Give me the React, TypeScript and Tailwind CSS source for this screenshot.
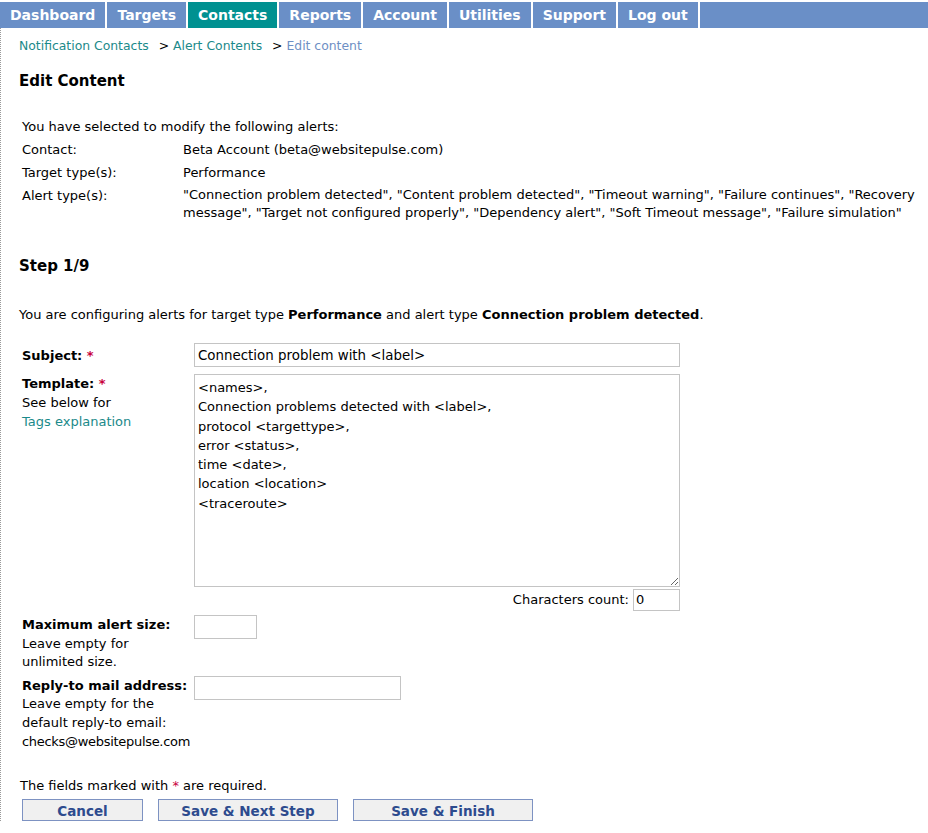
import { useState } from "react";

const tabs = ["Dashboard", "Targets", "Contacts", "Reports", "Account", "Utilities", "Support", "Log out"];

const alertTypes =
  '"Connection problem detected", "Content problem detected", "Timeout warning", "Failure continues", "Recovery message", "Target not configured properly", "Dependency alert", "Soft Timeout message", "Failure simulation"';

const initialTemplate = `<names>,
Connection problems detected with <label>,
protocol <targettype>,
error <status>,
time <date>,
location <location>
<traceroute>`;

function Star() {
  return <span className="text-[#c8003c]">*</span>;
}

export default function App() {
  const [subject, setSubject] = useState("Connection problem with <label>");
  const [template, setTemplate] = useState(initialTemplate);

  return (
    <div className="min-h-[833px] bg-white text-[13px] leading-[23px] text-black font-['DejaVu_Sans','Liberation_Sans',sans-serif]">
      <div className="mt-[2px] flex h-[26px] gap-[2px] bg-white">
        {tabs.map((t) => (
          <div
            key={t}
            className={`flex items-center px-[10px] text-[14px] font-bold text-white ${
              t === "Contacts" ? "bg-[#009191]" : "bg-[#6a8fc7]"
            }`}
          >
            {t}
          </div>
        ))}
        <div className="flex-1 bg-[#6a8fc7]" />
      </div>

      <div className="border-l border-dotted border-[#9a9a9a] pl-[18px] pr-[4px]">
        <div className="pt-[6px] text-[12.4px] text-[#1b8a8a]">
          Notification Contacts <span className="ml-[6px] text-black">&gt;</span> Alert Contents{" "}
          <span className="ml-[6px] text-black">&gt;</span> <span className="text-[#6e8fc4]">Edit content</span>
        </div>

        <h2 className="mt-[13px] text-[15px] font-bold">Edit Content</h2>

        <div className="mt-[22px] pl-[3px]">
          <div>You have selected to modify the following alerts:</div>
          <div className="grid grid-cols-[161px_1fr]">
            <div>Contact:</div>
            <div>Beta Account (beta@websitepulse.com)</div>
            <div>Target type(s):</div>
            <div>Performance</div>
            <div>Alert type(s):</div>
            <div className="leading-[18px] pt-[2px]">{alertTypes}</div>
          </div>
        </div>

        <h2 className="mt-[33px] text-[15px] font-bold">Step 1/9</h2>

        <p className="mt-[25px]">
          You are configuring alerts for target type <b>Performance</b> and alert type{" "}
          <b>Connection problem detected</b>.
        </p>

        <div className="mt-[17px] pl-[3px]">
          <div className="flex items-start">
            <div className="w-[172px] pt-[1px] font-bold">
              Subject: <Star />
            </div>
            <input
              value={subject}
              onChange={(e) => setSubject(e.target.value)}
              className="h-[24px] w-[486px] border border-[#c4c4c4] px-[3px] text-[13.4px] outline-none"
            />
          </div>

          <div className="mt-[7px] flex items-start">
            <div className="w-[172px] leading-[19px]">
              <div className="font-bold">
                Template: <Star />
              </div>
              <div>See below for</div>
              <div className="text-[#1b8a8a]">Tags explanation</div>
            </div>
            <div className="flex flex-col items-end">
              <textarea
                value={template}
                onChange={(e) => setTemplate(e.target.value)}
                className="h-[213px] w-[486px] resize border border-[#c4c4c4] px-[3px] pt-[3px] text-[13px] leading-[19.3px] outline-none"
              />
              <div className="mt-[1px] flex items-center gap-[4px]">
                <span>Characters count:</span>
                <input
                  value="0"
                  readOnly
                  className="h-[22px] w-[47px] border border-[#c4c4c4] px-[2px] text-[13px] outline-none"
                />
              </div>
            </div>
          </div>

          <div className="mt-[4px] flex items-start">
            <div className="w-[172px] pt-[1px] leading-[18.5px]">
              <div className="font-bold">Maximum alert size:</div>
              <div>Leave empty for</div>
              <div>unlimited size.</div>
            </div>
            <input className="h-[24px] w-[63px] border border-[#c4c4c4] outline-none" />
          </div>

          <div className="mt-[4px] flex items-start">
            <div className="w-[172px] pt-[1px] leading-[18.7px]">
              <div className="font-bold whitespace-nowrap">Reply-to mail address:</div>
              <div>Leave empty for the</div>
              <div>default reply-to email:</div>
              <div className="tracking-[-0.3px]">checks@websitepulse.com</div>
            </div>
            <input className="h-[24px] w-[207px] border border-[#c4c4c4] outline-none" />
          </div>
        </div>

        <p className="mt-[23px] pl-[1px]">
          The fields marked with <Star /> are required.
        </p>

        <div className="mt-[2px] flex gap-[15px] pl-[3px]">
          {[
            ["Cancel", "w-[121px]"],
            ["Save & Next Step", "w-[180px]"],
            ["Save & Finish", "w-[180px]"],
          ].map(([label, w]) => (
            <button
              key={label}
              className={`${w} h-[22px] border border-[#7d92c2] bg-[#f0f0f0] text-[13.5px] font-bold text-[#2d4b8e]`}
            >
              {label}
            </button>
          ))}
        </div>
      </div>
    </div>
  );
}
